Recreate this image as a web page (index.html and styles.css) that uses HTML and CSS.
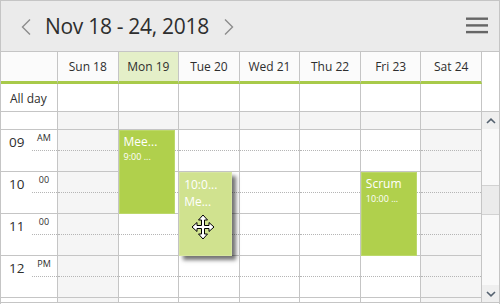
FILE: index.html
```html
<!DOCTYPE html>
<html lang="en">
<head>
<meta charset="utf-8">
<title>Scheduler</title>
<link rel="stylesheet" href="styles.css">
</head>
<body>
<div class="scheduler">
  <header class="toolbar">
    <button class="nav prev" aria-label="Previous">
      <svg width="12" height="18" viewBox="0 0 12 18"><path d="M10 1.5 L2.5 9 L10 16.5" fill="none" stroke="#8c8c8c" stroke-width="1.4"/></svg>
    </button>
    <h1 class="title">Nov 18 - 24, 2018</h1>
    <button class="nav next" aria-label="Next">
      <svg width="12" height="18" viewBox="0 0 12 18"><path d="M2 1.5 L9.5 9 L2 16.5" fill="none" stroke="#8c8c8c" stroke-width="1.4"/></svg>
    </button>
    <button class="menu" aria-label="Menu">
      <svg width="22" height="17" viewBox="0 0 22 17"><rect x="0" y="0.5" width="22" height="2.4" fill="#666"/><rect x="0" y="7.2" width="22" height="2.4" fill="#666"/><rect x="0" y="13.9" width="22" height="2.4" fill="#666"/></svg>
    </button>
  </header>

  <div class="head">
    <div class="hc corner"></div>
    <div class="hc dh">Sun 18</div>
    <div class="hc dh today">Mon 19</div>
    <div class="hc dh">Tue 20</div>
    <div class="hc dh">Wed 21</div>
    <div class="hc dh">Thu 22</div>
    <div class="hc dh">Fri 23</div>
    <div class="hc dh">Sat 24</div>
    <div class="hc gutter"></div>

    <div class="ac allday-label">All day</div>
    <div class="ac"></div>
    <div class="ac"></div>
    <div class="ac"></div>
    <div class="ac"></div>
    <div class="ac"></div>
    <div class="ac"></div>
    <div class="ac"></div>
    <div class="ac gutter"></div>
  </div>

  <div class="body">
    <div class="content">
      <div class="grid">
        <div class="times">
          <div class="t-partial"></div>
          <div class="hour"><span class="major">09</span><span class="minor">AM</span></div>
          <div class="hour"><span class="major">10</span><span class="minor">00</span></div>
          <div class="hour"><span class="major">11</span><span class="minor">00</span></div>
          <div class="hour"><span class="major">12</span><span class="minor">PM</span></div>
          <div class="hour"><span class="major"></span><span class="minor">00</span></div>
        </div>

        <div class="day weekend">
          <div class="slot b"></div><div class="slot a"></div><div class="slot b"></div><div class="slot a"></div><div class="slot b"></div><div class="slot a"></div><div class="slot b"></div><div class="slot a"></div><div class="slot b"></div><div class="slot a"></div><div class="slot b"></div>
        </div>
        <div class="day">
          <div class="slot b off"></div><div class="slot a"></div><div class="slot b"></div><div class="slot a"></div><div class="slot b"></div><div class="slot a"></div><div class="slot b"></div><div class="slot a"></div><div class="slot b"></div><div class="slot a"></div><div class="slot b"></div>
          <div class="event ev-meeting">
            <div class="ev-title">Mee...</div>
            <div class="ev-time">9:00 ...</div>
          </div>
        </div>
        <div class="day">
          <div class="slot b off"></div><div class="slot a"></div><div class="slot b"></div><div class="slot a"></div><div class="slot b"></div><div class="slot a"></div><div class="slot b"></div><div class="slot a"></div><div class="slot b"></div><div class="slot a"></div><div class="slot b"></div>
          <div class="event drag">
            <div class="ev-title">10:0...</div>
            <div class="ev-title">Me...</div>
            <svg class="move-cursor" width="24" height="26" viewBox="0 0 24 26">
              <path d="M12 1 L16.5 6 L13.5 6 L13.5 11.5 L18 11.5 L18 8.5 L23 13 L18 17.5 L18 14.5 L13.5 14.5 L13.5 20 L16.5 20 L12 25 L7.5 20 L10.5 20 L10.5 14.5 L6 14.5 L6 17.5 L1 13 L6 8.5 L6 11.5 L10.5 11.5 L10.5 6 L7.5 6 Z" fill="#fff" stroke="#000" stroke-width="1" stroke-linejoin="miter"/>
            </svg>
          </div>
        </div>
        <div class="day">
          <div class="slot b off"></div><div class="slot a"></div><div class="slot b"></div><div class="slot a"></div><div class="slot b"></div><div class="slot a"></div><div class="slot b"></div><div class="slot a"></div><div class="slot b"></div><div class="slot a"></div><div class="slot b"></div>
        </div>
        <div class="day">
          <div class="slot b off"></div><div class="slot a"></div><div class="slot b"></div><div class="slot a"></div><div class="slot b"></div><div class="slot a"></div><div class="slot b"></div><div class="slot a"></div><div class="slot b"></div><div class="slot a"></div><div class="slot b"></div>
        </div>
        <div class="day">
          <div class="slot b off"></div><div class="slot a"></div><div class="slot b"></div><div class="slot a"></div><div class="slot b"></div><div class="slot a"></div><div class="slot b"></div><div class="slot a"></div><div class="slot b"></div><div class="slot a"></div><div class="slot b"></div>
          <div class="event ev-scrum">
            <div class="ev-title">Scrum</div>
            <div class="ev-time">10:00 ...</div>
          </div>
        </div>
        <div class="day weekend">
          <div class="slot b"></div><div class="slot a"></div><div class="slot b"></div><div class="slot a"></div><div class="slot b"></div><div class="slot a"></div><div class="slot b"></div><div class="slot a"></div><div class="slot b"></div><div class="slot a"></div><div class="slot b"></div>
        </div>
      </div>
    </div>
    <div class="vscroll">
      <div class="sb-btn">
        <svg width="10" height="6" viewBox="0 0 10 6"><path d="M1 5 L5 1.2 L9 5" fill="none" stroke="#556270" stroke-width="1.6"/></svg>
      </div>
      <div class="track"><div class="thumb"></div></div>
      <div class="sb-btn">
        <svg width="10" height="6" viewBox="0 0 10 6"><path d="M1 1 L5 4.8 L9 1" fill="none" stroke="#556270" stroke-width="1.6"/></svg>
      </div>
    </div>
  </div>
</div>
</body>
</html>
```

FILE: styles.css
```css
* { box-sizing: border-box; }

html, body {
  margin: 0;
  padding: 0;
  background: #fff;
  overflow: hidden;
}

body {
  font-family: "Open Sans", "Noto Sans", "Liberation Sans", sans-serif;
  color: #2e2e2e;
}

.scheduler {
  width: 500px;
  height: 304px;
  border: 1px solid #c5c5c5;
  border-bottom: none;
  display: flex;
  flex-direction: column;
  overflow: hidden;
}

/* toolbar */
.toolbar {
  height: 51px;
  flex: none;
  background: #ebebeb;
  border-bottom: 1px solid #c5c5c5;
  display: flex;
  align-items: center;
  padding: 0 11px 0 19px;
}

.toolbar button {
  background: none;
  border: 0;
  padding: 0;
  margin: 0;
  display: flex;
  align-items: center;
}

.toolbar .nav { height: 18px; margin-top: 2px; }
.toolbar .nav.next { margin-left: 14px; }

.title {
  margin: 0 0 0 13px;
  font-size: 21px;
  font-weight: 400;
  letter-spacing: -0.3px;
  line-height: 26px;
  color: #2e2e2e;
}

.toolbar .menu {
  margin-left: auto;
  margin-top: -1px;
}

/* header rows */
.head {
  flex: none;
  display: grid;
  grid-template-columns: 57px repeat(7, 1fr) 17px;
  grid-template-rows: 32px 28px;
}

.hc {
  background: #fbfbfb;
  border-right: 1px solid #c5c5c5;
  border-bottom: 3px solid #a8ca4a;
  font-size: 12px;
  display: flex;
  align-items: center;
  justify-content: center;
  padding-bottom: 1px;
}

.hc.today { background: #e4efc8; }

.hc.gutter {
  background: #fff;
  border-right: 0;
  border-bottom: 0;
}

.ac {
  background: #fff;
  border-right: 1px solid #c5c5c5;
  border-bottom: 1px solid #c5c5c5;
}

.ac.gutter { border-right: 0; }

.allday-label {
  font-size: 12px;
  display: flex;
  align-items: center;
  padding-left: 9px;
  padding-top: 1px;
}

/* body */
.body {
  flex: none;
  height: 191px;
  display: flex;
  border-bottom: 1px solid #c5c5c5;
}

.content {
  flex: 1;
  overflow: hidden;
}

.grid {
  margin-top: -3px;
  display: grid;
  grid-template-columns: 57px repeat(7, 1fr);
}

.times {
  border-right: 1px solid #c5c5c5;
}

.t-partial {
  height: 21px;
  border-bottom: 1px solid #c5c5c5;
}

.hour {
  height: 42px;
  border-bottom: 1px solid #c5c5c5;
  display: grid;
  grid-template-columns: 31px 1fr;
  grid-template-rows: 21px 20px;
}

.major {
  grid-row: 1 / 3;
  font-size: 13.5px;
  line-height: 18px;
  padding: 3px 0 0 8px;
}

.minor {
  font-size: 9px;
  line-height: 12px;
  text-align: center;
  padding-top: 2px;
  padding-right: 1px;
  border-bottom: 1px dotted #b5b5b5;
}

.day {
  position: relative;
  border-right: 1px solid #c5c5c5;
}

.day.weekend { background: #f5f5f5; }

.slot { height: 21px; }
.slot.a { border-bottom: 1px dotted #b5b5b5; }
.slot.b { border-bottom: 1px solid #c5c5c5; }
.slot.off { background: #f5f5f5; }

/* events */
.event {
  position: absolute;
  top: 21px;
  left: 0;
  height: 84px;
  background: #b0d04c;
  border: 1px solid #bcd86a;
  color: #fff;
  padding: 2px 4px;
  overflow: hidden;
  white-space: nowrap;
}

.ev-meeting { width: 56px; }

.ev-scrum {
  top: 63px;
  width: 56px;
}

.drag {
  top: 63px;
  width: 53px;
  background: #d0e28f;
  border-color: #d7e6a0;
  box-shadow: 4px 4px 4px rgba(0, 0, 0, 0.55);
  overflow: visible;
  z-index: 2;
  padding-top: 3px;
}

.ev-title {
  font-size: 12px;
  line-height: 17px;
}

.ev-time {
  font-size: 9px;
  line-height: 14px;
}

.move-cursor {
  position: absolute;
  left: 11px;
  top: 41px;
}

/* scrollbar */
.vscroll {
  width: 17px;
  flex: none;
  display: flex;
  flex-direction: column;
  background: #f9f9f9;
}

.sb-btn {
  height: 17px;
  flex: none;
  background: #efefef;
  display: flex;
  align-items: center;
  justify-content: center;
}

.track {
  flex: 1;
  display: flex;
  flex-direction: column;
}

.thumb {
  margin-top: 56px;
  height: 30px;
  background: #ebebeb;
  border-top: 1px solid #d2d2d2;
  border-bottom: 1px solid #d2d2d2;
}
```
